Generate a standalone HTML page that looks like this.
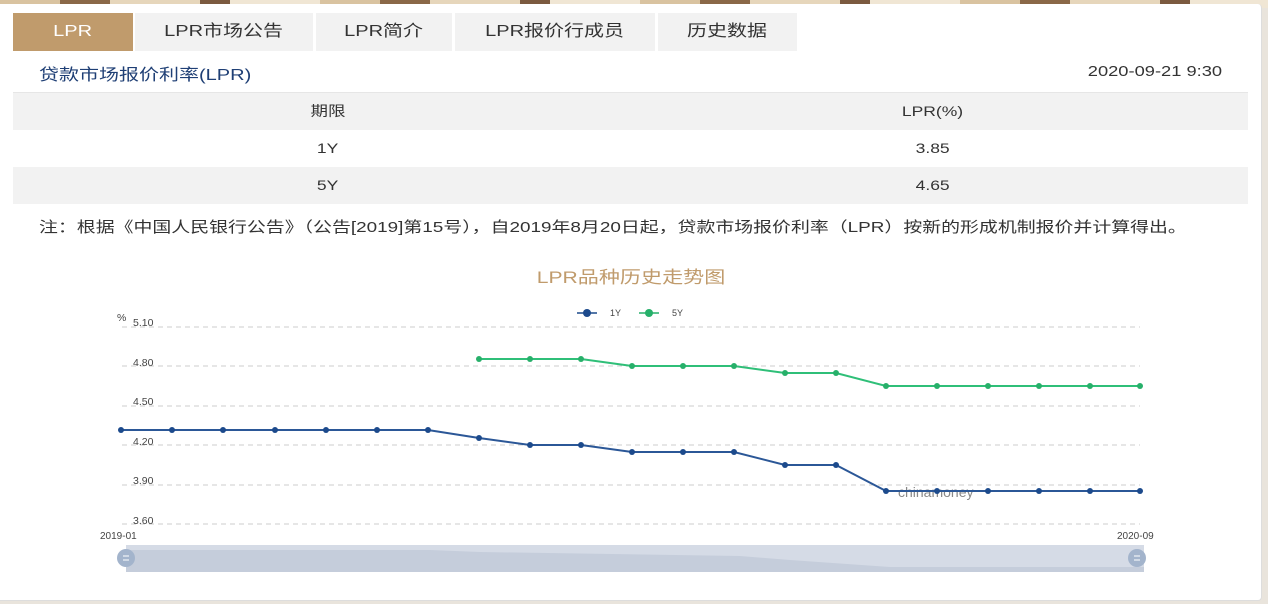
<!DOCTYPE html>
<html><head><meta charset="utf-8"><style>
body{margin:0;width:1268px;height:604px;overflow:hidden;background:#e9e4dc;font-family:"Liberation Sans","Noto Sans CJK SC",sans-serif;position:relative}
.top{position:absolute;left:0;top:0;width:1268px;height:8px;background:repeating-linear-gradient(90deg,#d9c3a0 0 60px,#8a6848 60px 110px,#e6d6bb 110px 200px,#7b5a40 200px 230px,#f0e6d4 230px 320px)}
.card{position:absolute;left:0;top:4px;width:1261px;height:596px;background:#fff;border-right:1px solid #ddd;border-bottom:1px solid #ddd;border-radius:0 4px 4px 0}
.a{position:absolute}
.s{display:inline-block;transform:scaleX(1.25);transform-origin:center}
.sl{display:inline-block;transform:scaleX(1.25);transform-origin:left}
.sr{display:inline-block;transform:scaleX(1.22);transform-origin:right}
.tab{position:absolute;top:13px;height:38px;line-height:38px;text-align:center;background:#f2f2f2;color:#333;font-size:16px}
</style></head><body>
<div class="top"></div>
<div class="card"></div>
<div class="tab" style="left:13px;width:120px;background:#c09b6c;color:#fff"><span class="s">LPR</span></div>
<div class="tab" style="left:135px;width:178px"><span class="s">LPR市场公告</span></div>
<div class="tab" style="left:316px;width:136px"><span class="s">LPR简介</span></div>
<div class="tab" style="left:455px;width:200px"><span class="s">LPR报价行成员</span></div>
<div class="tab" style="left:658px;width:139px"><span class="s">历史数据</span></div>
<div class="a" style="left:39px;top:61px;font-size:16px;color:#1f3f75"><span class="sl">贷款市场报价利率(LPR)</span></div>
<div class="a" style="right:46px;top:63px;font-size:15px;color:#333"><span class="sr">2020-09-21 9:30</span></div>
<div class="a" style="left:13px;top:92px;width:1235px;height:1px;background:#e6e6e6"></div>
<div class="a" style="left:13px;top:93px;width:1235px;height:37px;background:#f2f2f2"></div>
<div class="a" style="left:13px;top:167px;width:1235px;height:37px;background:#f2f2f2"></div>
<div class="a" style="left:13px;top:93px;width:630px;font-size:14px;color:#333;text-align:center;line-height:37px"><span class="s">期限</span><br><span class="s">1Y</span><br><span class="s">5Y</span></div>
<div class="a" style="left:643px;top:93px;width:580px;font-size:14px;color:#333;text-align:center;line-height:37px"><span class="s">LPR(%)</span><br><span class="s">3.85</span><br><span class="s">4.65</span></div>
<div class="a" style="left:39px;top:216px;font-size:15px;color:#333;white-space:nowrap"><span class="sl" style="transform:scaleX(1.26)">注：根据《中国人民银行公告》（公告[2019]第15号），自2019年8月20日起，贷款市场报价利率（LPR）按新的形成机制报价并计算得出。</span></div>
<div class="a" style="left:0;top:263px;width:1262px;text-align:center;font-size:17px;color:#c09b6c"><span class="s" style="transform:scaleX(1.24)">LPR品种历史走势图</span></div>
<svg class="a" style="left:0;top:0" width="1268" height="604">
<g stroke="#ccc" stroke-dasharray="5,4" stroke-width="1">
<line x1="122" y1="327" x2="1140" y2="327"/><line x1="122" y1="366" x2="1140" y2="366"/><line x1="122" y1="406" x2="1140" y2="406"/><line x1="122" y1="445" x2="1140" y2="445"/><line x1="122" y1="485" x2="1140" y2="485"/><line x1="122" y1="524" x2="1140" y2="524"/>
</g>
<g font-size="10.5" fill="#444" font-family="Liberation Sans">
<text x="117" y="321">%</text><text x="133" y="326">5.10</text><text x="133" y="366">4.80</text><text x="133" y="405">4.50</text><text x="133" y="445">4.20</text><text x="133" y="484">3.90</text><text x="133" y="524">3.60</text>
<text x="100" y="539" font-size="10">2019-01</text><text x="1117" y="539" font-size="10">2020-09</text>
<text x="610" y="316" font-size="9">1Y</text><text x="672" y="316" font-size="9">5Y</text>
</g>
<line x1="577" y1="313" x2="597" y2="313" stroke="#1c4a8c" stroke-width="1.5"/><circle cx="587" cy="313" r="4" fill="#1c4a8c"/>
<line x1="639" y1="313" x2="659" y2="313" stroke="#27b06a" stroke-width="1.5"/><circle cx="649" cy="313" r="4" fill="#27b06a"/>
<text x="898" y="497" font-size="14" fill="#888" font-family="Liberation Sans">chinamoney</text>
<polyline fill="none" stroke="#2b5797" stroke-width="2" points="121,430 172,430 223,430 275,430 326,430 377,430 428,430 479,438 530,445 581,445 632,452 683,452 734,452 785,465 836,465 886,491 937,491 988,491 1039,491 1090,491 1140,491"/>
<g fill="#1c4a8c"><circle cx="121" cy="430" r="3"/><circle cx="172" cy="430" r="3"/><circle cx="223" cy="430" r="3"/><circle cx="275" cy="430" r="3"/><circle cx="326" cy="430" r="3"/><circle cx="377" cy="430" r="3"/><circle cx="428" cy="430" r="3"/><circle cx="479" cy="438" r="3"/><circle cx="530" cy="445" r="3"/><circle cx="581" cy="445" r="3"/><circle cx="632" cy="452" r="3"/><circle cx="683" cy="452" r="3"/><circle cx="734" cy="452" r="3"/><circle cx="785" cy="465" r="3"/><circle cx="836" cy="465" r="3"/><circle cx="886" cy="491" r="3"/><circle cx="937" cy="491" r="3"/><circle cx="988" cy="491" r="3"/><circle cx="1039" cy="491" r="3"/><circle cx="1090" cy="491" r="3"/><circle cx="1140" cy="491" r="3"/></g>
<polyline fill="none" stroke="#2fbf78" stroke-width="2" points="479,359 530,359 581,359 632,366 683,366 734,366 785,373 836,373 886,386 937,386 988,386 1039,386 1090,386 1140,386"/>
<g fill="#27b06a"><circle cx="479" cy="359" r="3"/><circle cx="530" cy="359" r="3"/><circle cx="581" cy="359" r="3"/><circle cx="632" cy="366" r="3"/><circle cx="683" cy="366" r="3"/><circle cx="734" cy="366" r="3"/><circle cx="785" cy="373" r="3"/><circle cx="836" cy="373" r="3"/><circle cx="886" cy="386" r="3"/><circle cx="937" cy="386" r="3"/><circle cx="988" cy="386" r="3"/><circle cx="1039" cy="386" r="3"/><circle cx="1090" cy="386" r="3"/><circle cx="1140" cy="386" r="3"/></g>
<rect x="126" y="545" width="1018" height="27" fill="#d5dbe6"/>
<path d="M126,550 L430,550 L480,552 L740,556 L790,560 L890,567 L1144,567 L1144,572 L126,572Z" fill="#c5cddb"/>
<circle cx="126" cy="558" r="9" fill="#a3b4cc"/><circle cx="1137" cy="558" r="9" fill="#a3b4cc"/>
<g stroke="#fff" stroke-width="1"><line x1="123" y1="556" x2="129" y2="556"/><line x1="123" y1="560" x2="129" y2="560"/><line x1="1134" y1="556" x2="1140" y2="556"/><line x1="1134" y1="560" x2="1140" y2="560"/></g>
</svg>
</body></html>
